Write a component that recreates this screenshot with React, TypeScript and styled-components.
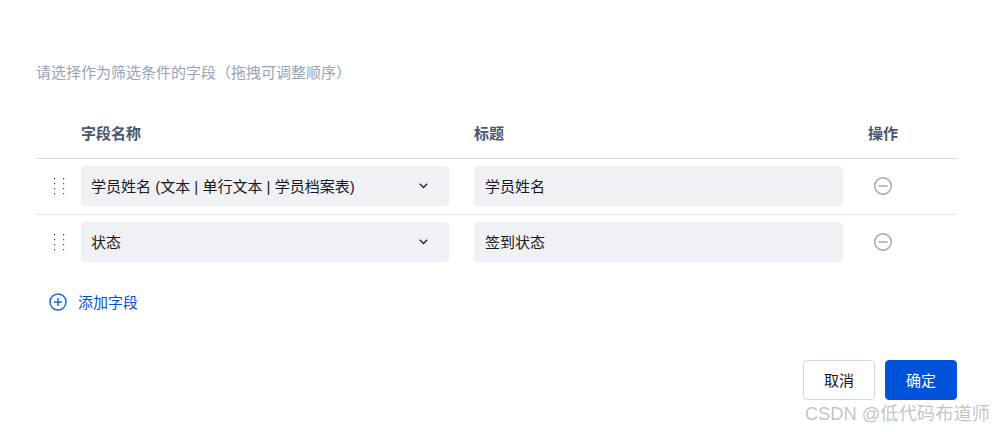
import React from "react";
import styled, { createGlobalStyle } from "styled-components";

const FONT = `"Liberation Sans", "Noto Sans CJK SC", sans-serif`;

const rows = [
  { field: "学员姓名 (文本 | 单行文本 | 学员档案表)", title: "学员姓名" },
  { field: "状态", title: "签到状态" },
];

const GlobalStyle = createGlobalStyle`
  html, body {
    margin: 0;
    padding: 0;
    background: #fff;
  }
  body {
    font-family: ${FONT};
    font-size: 15px;
  }
`;

const DragHandle = () => (
  <HandleSvg width="11" height="17" viewBox="0 0 11 17">
    {[0, 9].map((x) =>
      [0, 5, 10, 15].map((y) => (
        <rect key={`${x}-${y}`} x={x} y={y} width="1.2" height="1.2" fill="#3f4654" />
      ))
    )}
  </HandleSvg>
);

const Chevron = () => (
  <ChevronSvg width="9" height="6" viewBox="0 0 9 6" fill="none" stroke="#1d2330" strokeWidth="1.4">
    <path d="M.8.8l3.7 3.7L8.2.8" />
  </ChevronSvg>
);

const MinusCircle = () => (
  <svg width="20" height="20" viewBox="0 0 20 20" fill="none" stroke="#9aa5b8" strokeWidth="1.4">
    <circle cx="10" cy="10" r="8.3" />
    <path d="M5.5 10h9" />
  </svg>
);

const PlusCircle = () => (
  <PlusSvg width="18" height="18" viewBox="0 0 18 18" fill="none" stroke="#1a66e0" strokeWidth="1.5">
    <circle cx="9" cy="9" r="8" />
    <path d="M9 5v8M5 9h8" />
  </PlusSvg>
);

const App = () => {
  return (
    <>
      <GlobalStyle />
      <Page>
        <Hint>请选择作为筛选条件的字段（拖拽可调整顺序）</Hint>
        <HeaderRow>
          <span />
          <HeaderCell>字段名称</HeaderCell>
          <HeaderCell>标题</HeaderCell>
          <HeaderCell>操作</HeaderCell>
        </HeaderRow>
        <RowList>
          {rows.map((row) => (
            <Row key={row.title}>
              <DragHandle />
              <SelectField>
                <span>{row.field}</span>
                <Chevron />
              </SelectField>
              <Field>{row.title}</Field>
              <RemoveButton>
                <MinusCircle />
              </RemoveButton>
            </Row>
          ))}
        </RowList>
        <AddRow>
          <PlusCircle />
          添加字段
        </AddRow>
        <Footer>
          <CancelButton>取消</CancelButton>
          <ConfirmButton>确定</ConfirmButton>
        </Footer>
        <Watermark>CSDN @低代码布道师</Watermark>
      </Page>
    </>
  );
};

const Page = styled.div`
  position: relative;
  width: 993px;
  height: 432px;
  box-sizing: border-box;
  padding: 62px 36px 0;
  overflow: hidden;
`;

const Hint = styled.div`
  height: 20px;
  padding-top: 1px;
  line-height: 20px;
  color: #97a3b8;
  font-size: 15px;
  box-sizing: border-box;
`;

const HeaderRow = styled.div`
  display: grid;
  grid-template-columns: 20px 368px 369px 1fr;
  column-gap: 25px;
  align-items: center;
  height: 41px;
  margin-top: 30px;
  padding-bottom: 5px;
  border-bottom: 1px solid #d5d9e6;
`;

const HeaderCell = styled.div`
  color: #4a5670;
  font-weight: 700;
  font-size: 15px;
`;

const RowList = styled.div`
  display: flex;
  flex-direction: column;
`;

const Row = styled.div`
  display: grid;
  grid-template-columns: 20px 368px 369px 1fr;
  column-gap: 25px;
  align-items: center;
  box-sizing: border-box;
  height: 56px;
  padding: 7px 0 8px;
  border-bottom: 1px solid #e4e7ed;

  &:last-child {
    border-bottom-color: transparent;
  }
`;

const HandleSvg = styled.svg`
  margin: 1px 0 0 18px;
`;

const ChevronSvg = styled.svg`
  margin-top: 2px;
`;

const PlusSvg = styled.svg`
  margin-top: 1px;
`;

const Field = styled.div`
  display: flex;
  align-items: center;
  box-sizing: border-box;
  height: 40px;
  padding: 0 20px 2px 11px;
  background: #eff1f5;
  border-radius: 4px;
  color: #16181d;
  font-size: 15px;
`;

const SelectField = styled(Field)`
  justify-content: space-between;
  padding-left: 10px;
  padding-right: 21px;
`;

const RemoveButton = styled.div`
  display: flex;
  align-items: center;
  margin-left: 5px;
`;

const AddRow = styled.div`
  display: flex;
  align-items: center;
  gap: 11px;
  margin: 19px 0 0 13px;
  box-sizing: border-box;
  height: 24px;
  padding-bottom: 2px;
  color: #0052d9;
  font-size: 15px;
`;

const Footer = styled.div`
  display: flex;
  justify-content: flex-end;
  gap: 10px;
  margin-top: 46px;
`;

const BaseButton = styled.button`
  box-sizing: border-box;
  width: 72px;
  height: 40px;
  border-radius: 4px;
  font-family: ${FONT};
  font-size: 15px;
  padding: 0 0 2px;
`;

const CancelButton = styled(BaseButton)`
  background: #fff;
  border: 1px solid #d5d9e6;
  color: #16181d;
`;

const ConfirmButton = styled(BaseButton)`
  background: #0052d9;
  border: 1px solid #0052d9;
  color: #fff;
`;

const Watermark = styled.div`
  position: absolute;
  right: 3px;
  top: 402px;
  color: rgba(120, 120, 120, 0.45);
  font-family: ${FONT};
  font-size: 18.3px;
  line-height: 24px;
  white-space: nowrap;
`;

export default App;
